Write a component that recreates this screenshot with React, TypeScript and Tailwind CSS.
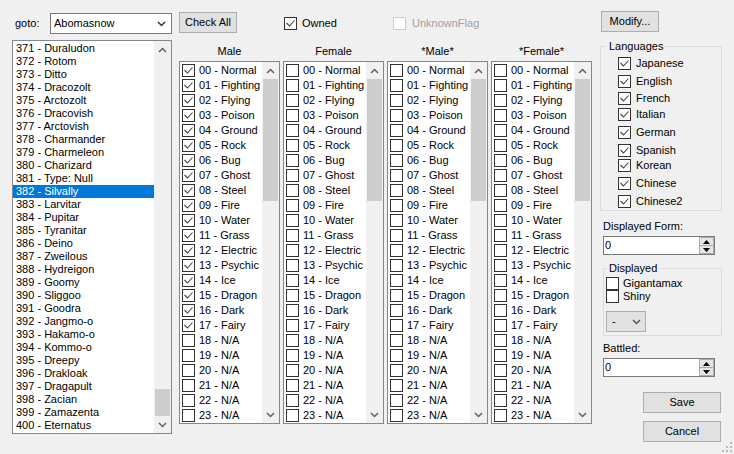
const pokemon = [
  '371 - Duraludon',
  '372 - Rotom',
  '373 - Ditto',
  '374 - Dracozolt',
  '375 - Arctozolt',
  '376 - Dracovish',
  '377 - Arctovish',
  '378 - Charmander',
  '379 - Charmeleon',
  '380 - Charizard',
  '381 - Type: Null',
  '382 - Silvally',
  '383 - Larvitar',
  '384 - Pupitar',
  '385 - Tyranitar',
  '386 - Deino',
  '387 - Zweilous',
  '388 - Hydreigon',
  '389 - Goomy',
  '390 - Sliggoo',
  '391 - Goodra',
  '392 - Jangmo-o',
  '393 - Hakamo-o',
  '394 - Kommo-o',
  '395 - Dreepy',
  '396 - Drakloak',
  '397 - Dragapult',
  '398 - Zacian',
  '399 - Zamazenta',
  '400 - Eternatus',
];

const types = [
  'Normal', 'Fighting', 'Flying', 'Poison', 'Ground', 'Rock', 'Bug', 'Ghost', 'Steel',
  'Fire', 'Water', 'Grass', 'Electric', 'Psychic', 'Ice', 'Dragon', 'Dark', 'Fairy',
  'N/A', 'N/A', 'N/A', 'N/A', 'N/A', 'N/A',
];

const columns = ['Male', 'Female', '*Male*', '*Female*'];

// manual placement in the original form, hence uneven spacing
const languages = [
  { name: 'Japanese', gap: 'mt-[4px]' },
  { name: 'English', gap: 'mt-[5px]' },
  { name: 'French', gap: 'mt-[4px]' },
  { name: 'Italian', gap: 'mt-[3px]' },
  { name: 'German', gap: 'mt-[5px]' },
  { name: 'Spanish', gap: 'mt-[5px]' },
  { name: 'Korean', gap: 'mt-[2px]' },
  { name: 'Chinese', gap: 'mt-[5px]' },
  { name: 'Chinese2', gap: 'mt-[5px]' },
];

function Box({ checked, disabled }: { checked?: boolean; disabled?: boolean }) {
  return (
    <span
      className={`flex h-[13px] w-[13px] shrink-0 items-center justify-center border bg-white ${
        disabled ? 'border-[#cccccc]' : 'border-[#333333]'
      }`}
    >
      {checked && (
        <svg width="11" height="11" viewBox="0 0 11 11">
          <path d="M1.5 5 L4.5 8 L9.5 2.5" fill="none" stroke="#444" strokeWidth="1.1" />
        </svg>
      )}
    </span>
  );
}

function Chevron({ up, color = '#606060' }: { up?: boolean; color?: string }) {
  return (
    <svg width="9" height="6" viewBox="0 0 9 6">
      <path
        d={up ? 'M1 5 L4.5 1.5 L8 5' : 'M1 1 L4.5 4.5 L8 1'}
        fill="none"
        stroke={color}
        strokeWidth="1.5"
      />
    </svg>
  );
}

function ScrollBar({ thumb, atEnd }: { thumb: string; atEnd?: boolean }) {
  return (
    <div className="flex w-[17px] shrink-0 flex-col bg-[#f0f0f0]">
      <div className="flex h-[17px] items-center justify-center">
        <Chevron up />
      </div>
      <div className={`flex flex-1 flex-col px-[1px] ${atEnd ? 'justify-end' : ''}`}>
        <div className={`bg-[#cdcdcd] ${thumb}`} />
      </div>
      <div className="flex h-[17px] items-center justify-center">
        <Chevron />
      </div>
    </div>
  );
}

function Button({ className, children }: { className: string; children: string }) {
  return (
    <div className={`flex items-center justify-center border border-[#adadad] bg-[#e1e1e1] ${className}`}>
      {children}
    </div>
  );
}

function Spinner() {
  return (
    <div className="ml-[3px] flex h-[19px] w-[112px] border border-[#7a7a7a] bg-white">
      <div className="flex flex-1 items-center pl-[1px]">0</div>
      <div className="flex w-[15px] flex-col">
        <div className="flex flex-1 items-center justify-center border border-[#adadad] bg-[#e5e5e5]">
          <svg width="7" height="4" viewBox="0 0 7 4">
            <path d="M0 4 L3.5 0 L7 4 Z" fill="#000" />
          </svg>
        </div>
        <div className="flex flex-1 items-center justify-center border border-t-0 border-[#adadad] bg-[#e5e5e5]">
          <svg width="7" height="4" viewBox="0 0 7 4">
            <path d="M0 0 L3.5 4 L7 0 Z" fill="#000" />
          </svg>
        </div>
      </div>
    </div>
  );
}

function TypeList({ checked }: { checked: boolean }) {
  return (
    <div className="flex h-[363px] w-[101px] overflow-hidden border border-[#828790] bg-white">
      <div className="flex flex-1 flex-col pt-[1px]">
        {types.map((t, i) => (
          <div key={i} className="flex h-[15px] shrink-0 items-center gap-[4px] pl-[2px]">
            <Box checked={checked && i < 18} />
            <span className="whitespace-nowrap">
              {String(i).padStart(2, '0')} - {t}
            </span>
          </div>
        ))}
      </div>
      <ScrollBar thumb="h-[122px]" />
    </div>
  );
}

export default function App() {
  return (
    <div className="relative flex h-[454px] w-[734px] overflow-hidden bg-[#f0f0f0] pl-[12px] font-['Liberation_Sans',Arial,sans-serif] text-[11px] leading-[13px] text-black">
      {/* species picker */}
      <div className="flex w-[160px] flex-col pt-[13px]">
        <div className="flex h-[21px] items-center">
          <span className="pl-[3px]">goto:</span>
          <div className="ml-auto flex h-[21px] w-[122px] items-center border border-[#7a7a7a] bg-white pl-[3px] pr-[5px]">
            <span className="flex-1">Abomasnow</span>
            <Chevron color="#333" />
          </div>
        </div>
        <div className="mt-[6px] flex h-[394px] overflow-hidden border border-[#828790] bg-white">
          <div className="flex flex-1 flex-col pt-[1px]">
            {pokemon.map((p) => (
              <div
                key={p}
                className={`h-[13px] shrink-0 whitespace-nowrap pl-[3px] ${
                  p === '382 - Silvally' ? 'bg-[#0078d7] text-white' : ''
                }`}
              >
                {p}
              </div>
            ))}
          </div>
          <ScrollBar thumb="h-[27px]" atEnd />
        </div>
      </div>

      {/* form flags */}
      <div className="ml-[7px] flex w-[413px] flex-col pt-[12px]">
        <div className="flex h-[21px] items-center">
          <Button className="h-[21px] w-[58px]">Check All</Button>
          <div className="ml-[47px] mt-[2px] flex w-[109px] items-center gap-[5px]">
            <Box checked />
            <span>Owned</span>
          </div>
          <div className="mt-[2px] flex items-center gap-[6px] text-[#a0a0a0]">
            <Box disabled />
            <span>UnknownFlag</span>
          </div>
        </div>
        <div className="mt-[8px] flex h-[20px] gap-[3px]">
          {columns.map((c) => (
            <div key={c} className="flex w-[101px] items-center justify-center">
              {c}
            </div>
          ))}
        </div>
        <div className="flex gap-[3px]">
          {columns.map((c, i) => (
            <TypeList key={c} checked={i === 0} />
          ))}
        </div>
      </div>

      {/* right panel */}
      <div className="ml-[8px] flex w-[122px] flex-col pt-[11px]">
        <Button className="ml-[1px] h-[21px] w-[58px]">Modify...</Button>

        <fieldset className="mt-[8px] border border-[#dcdcdc]">
          <legend className="ml-[6px] px-[2px]">Languages</legend>
          <div className="flex flex-col pb-[2px] pl-[17px]">
            {languages.map((l) => (
              <div key={l.name} className={`flex h-[13px] items-center gap-[5px] ${l.gap}`}>
                <Box checked />
                <span>{l.name}</span>
              </div>
            ))}
          </div>
        </fieldset>

        <div className="mt-[9px] pl-[3px]">Displayed Form:</div>
        <div className="mt-[3px]">
          <Spinner />
        </div>

        <fieldset className="ml-[3px] mt-[7px] w-[119px] border border-[#dcdcdc]">
          <legend className="ml-[3px] px-[2px]">Displayed</legend>
          <div className="flex flex-col pb-[3px] pl-[2px]">
            <div className="mt-[2px] flex h-[13px] items-center gap-[4px]">
              <Box />
              <span>Gigantamax</span>
            </div>
            <div className="flex h-[13px] items-center gap-[4px]">
              <Box />
              <span>Shiny</span>
            </div>
            <div className="mt-[8px] flex h-[21px] w-[40px] items-center border border-[#adadad] bg-[#e1e1e1] pl-[5px] pr-[4px]">
              <span className="flex-1">-</span>
              <Chevron color="#555" />
            </div>
          </div>
        </fieldset>

        <div className="mt-[6px] pl-[3px]">Battled:</div>
        <div className="mt-[3px]">
          <Spinner />
        </div>

        <Button className="ml-[43px] mt-[15px] h-[21px] w-[78px]">Save</Button>
        <Button className="ml-[43px] mt-[8px] h-[21px] w-[78px]">Cancel</Button>
      </div>

      {/* size grip */}
      <svg className="absolute bottom-[2px] right-[2px]" width="10" height="10" viewBox="0 0 10 10">
        {[
          [8, 0], [8, 4], [4, 4], [8, 8], [4, 8], [0, 8],
        ].map(([x, y]) => (
          <rect key={`${x}-${y}`} x={x} y={y} width="2" height="2" fill="#b8b8b8" />
        ))}
      </svg>
    </div>
  );
}
